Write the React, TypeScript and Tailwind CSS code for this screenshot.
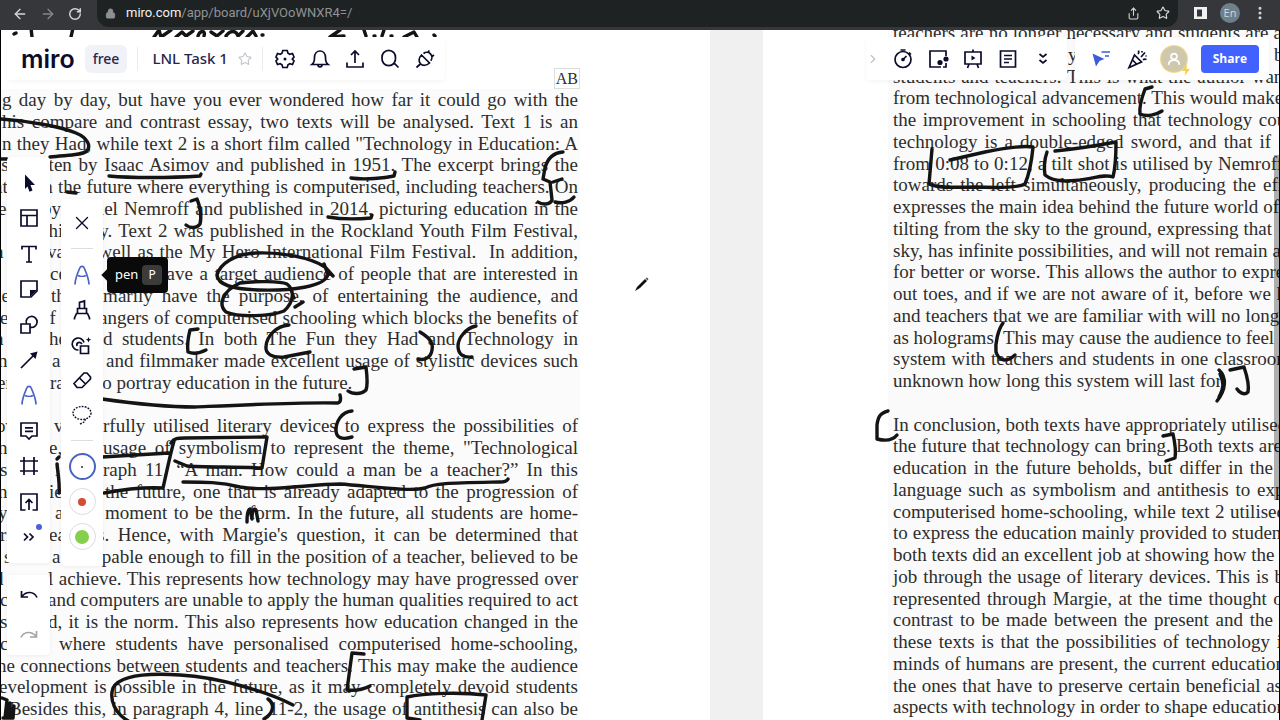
import React from 'react';
import { ArrowLeft, ArrowRight, ChevronRight, Lock, MoreVertical, RotateCw, Share as ShareIcon, Star, X } from 'lucide-react';

// A fragment of a line: where it starts on the board and what it says.
type Fragment = [x: number, text: string];

interface Line {
  parts: Fragment[];
  end: number;
}

const row = (end: number, ...parts: Fragment[]): Line => ({ parts, end });
const left = (...parts: Fragment[]): Line => row(578, ...parts);
const right = (end: number, text: string): Line => row(end, [893, text]);

const essayLines: Line[] = [
  left([2, 'g day by day, but have you ever wondered how far it could go with the']),
  left([2, 'his compare and contrast essay, two texts will be analysed. Text 1 is an']),
  left([2, 'n they Had, while text 2 is a short film called "Technology in Education: A']),
  left([-4, 'is'], [18, 'written by Isaac Asimov and published in 1951. The excerpt brings the']),
  left([-6, 'at'], [38, 'in the future where everything is computerised, including teachers. On']),
  left([-2, 'ed'], [42, 'by Daniel Nemroff and published in 2014, picturing education in the']),
  left([37, 'This way. Text 2 was published in the Rockland Youth Film Festival,']),
  left([-6, 'n'], [10, 'Festival as well as the My Hero International Film Festival.\u00a0 In addition,']),
  left([50, 'ces'], [157, 'have a target audience of people that are interested in']),
  left([-8, 'ne'], [51, 'th'], [82, 'primarily have the purpose, of entertaining the audience, and']),
  left([0, 'e'], [40, 'of the dangers of computerised schooling which blocks the benefits of']),
  left([-6, 'n'], [49, 'he'], [85, 'and students. In both The Fun they Had and Technology in']),
  left([-2, 'n'], [52, 'a'], [106, 'and filmmaker made excellent usage of stylistic devices such']),
  row(348, [-3, 'en'], [50, 'ra'], [97, 'to portray education in the future.']),
  row(578, [0, '']),
  left([-4, 'ov'], [54, 'v'], [103, 'rfully utilised literary devices to express the possibilities of']),
  left([-2, 'n'], [49, 'e,'], [103, 'usage of symbolism to represent the theme, "Technological']),
  left([0, 'ss'], [55, 'i'], [103, 'raph 11, “A man. How could a man be a teacher?” In this']),
  left([-2, 'n'], [49, 'ie'], [105, 'the future, one that is already adapted to the progression of']),
  left([-2, 'y'], [55, 'a'], [105, 'moment to be the form. In the future, all students are home-']),
  left([0, 'ri'], [49, 'ea'], [97, 's. Hence, with Margie\'s question, it can be determined that']),
  left([4, 's'], [52, 'a'], [85, 'capable enough to fill in the position of a teacher, believed to be']),
  left([-6, 'd'], [48, 'l achieve. This represents how technology may have progressed over']),
  left([0, 'c'], [48, 'and computers are unable to apply the human qualities required to act']),
  left([0, 's'], [48, 'd, it is the norm. This also represents how education changed in the']),
  left([0, 'c'], [59, 'where students have personalised computerised home-schooling,']),
  left([-3, 'ne connections between students and teachers. This may make the audience']),
  left([-1, 'evelopment is possible in the future, as it may completely devoid students']),
  left([9, 'Besides this, in paragraph 4, line 11-2, the usage of antithesis can also be']),
];

const conclusionLines: Line[] = [
  right(1282, 'teachers are no longer necessary and students are a'),
  row(1284, [1068, 'y'], [1274, 'b']),
  right(1296, 'students and teachers. This is what the author wants'),
  right(1280, 'from technological advancement. This would make'),
  right(1301, 'the improvement in schooling that technology could'),
  right(1271, 'technology is a double-edged sword, and that if'),
  right(1283, 'from 0:08 to 0:12, a tilt shot is utilised by Nemroff'),
  right(1306, 'towards the left simultaneously, producing the effect'),
  right(1279, 'expresses the main idea behind the future world of'),
  right(1272, 'tilting from the sky to the ground, expressing that'),
  right(1281, 'sky, has infinite possibilities, and will not remain a'),
  right(1299, 'for better or worse. This allows the author to express'),
  right(1286, 'out toes, and if we are not aware of it, before we k'),
  right(1294, 'and teachers that we are familiar with will no longer'),
  right(1272, 'as holograms. This may cause the audience to feel'),
  right(1291, 'system with teachers and students in one classroom'),
  right(1225, 'unknown how long this system will last for.'),
  row(1280, [893, '']),
  right(1286, 'In conclusion, both texts have appropriately utilised'),
  right(1282, 'the future that technology can bring. Both texts are'),
  right(1273, 'education in the future beholds, but differ in the'),
  right(1314, 'language such as symbolism and antithesis to express'),
  right(1286, 'computerised home-schooling, while text 2 utilised'),
  right(1294, 'to express the education mainly provided to students'),
  right(1274, 'both texts did an excellent job at showing how the'),
  right(1284, 'job through the usage of literary devices. This is b'),
  right(1289, 'represented through Margie, at the time thought of'),
  right(1273, 'contrast to be made between the present and the'),
  right(1282, 'these texts is that the possibilities of technology i'),
  right(1285, 'minds of humans are present, the current education'),
  right(1282, 'the ones that have to preserve certain beneficial as'),
  right(1284, 'aspects with technology in order to shape education'),
];

const strokes = [
  // handwriting cut off by the top bar
  'M14 34L16 33 M31 28L32 37 M73 28L71 37',
  'M154 37L159 30L161 37L171 30 M176 37L182 32L186 36L193 31 M198 36C200 30 206 30 204 36 M211 32L217 36L223 31 M226 36C230 30 236 30 238 36L243 31 M247 37L253 31L256 36 M262 35L263 35',
  'M340 30L330 37L344 36 M364 30L366 36 M374 36L375 36 M384 30L382 36 M391 36L392 36 M404 37L414 32L417 37 M434 35L435 36',
  'M0 119C30 121 62 127 76 133C88 138 91 146 87 151C80 156 66 155 50 157 M1 159L7 159',
  'M109 176C130 178 170 178 200 176L201 174 M67 192L76 193',
  'M191 201L197 199C200 206 202 217 200 224C197 228 191 229 186 225',
  'M333 276L325 267C310 257 280 252 256 253C234 254 220 264 217 275C218 285 232 289 258 290C290 291 326 287 328 274L324 264',
  'M303 302L295 307 M240 283C256 281 280 281 287 284C295 290 294 302 284 311C272 316 240 318 226 312C218 305 222 291 240 283 M291 290L294 298',
  'M198 329L190 330C188 338 187 346 188 352C193 354 200 353 206 350',
  'M289 325C276 326 267 336 266 346C265 354 272 358 284 357L310 352',
  'M420 332C428 337 434 342 432 350C431 357 425 361 418 359',
  'M476 326C466 328 458 338 458 346C458 354 463 358 472 357',
  'M354 369L366 367C367 375 368 385 366 390C361 395 352 394 348 391',
  'M102 399C130 403 170 407 195 407C240 405 300 402 338 403C341 402 341 399 340 395',
  'M352 411C341 412 336 422 336 430C336 438 342 440 352 437',
  'M171 443C174 438 178 438 185 438L267 437L262 468C240 467 200 467 187 466L175 461',
  'M102 457L169 453 M174 441C170 455 166 475 163 488C145 487 120 490 104 493',
  'M57 459L59 457 M57 464C58 474 60 484 59 493',
  'M183 482C205 482 220 482 240 487C270 492 310 484 340 484C370 486 410 492 425 488C435 483 450 483 500 482C505 482 507 481 508 479',
  'M247 522C247 514 248 509 250 509L252 519C252 510 254 508 256 510L258 521',
  'M351 178C365 180 385 178 394 176L395 172',
  'M328 217C345 220 360 219 371 218L372 215',
  'M563 152C552 153 547 160 545 168L543 179L550 182L552 200C550 205 542 205 538 202 M553 182L562 179 M555 202C562 204 570 202 574 197',
  'M364 654L352 653L347 690C355 691 362 690 370 686',
  'M420 720L407 718V697C425 693 460 692 486 695L482 720',
  'M293 705C270 693 220 677 180 675C150 673 120 675 113 688C109 700 115 714 130 722 M268 699C275 704 274 713 264 719',
  'M2 698L7 700L5 718L10 703L9 718L14 706L13 718L3 718',
  'M99 345L99 346',
  'M1152 87L1145 89C1142 97 1139 107 1140 114C1147 117 1156 115 1162 111',
  'M932 149L929 184C940 189 960 187 975 187C1000 188 1020 187 1025 184C1030 172 1032 158 1033 147C1020 145 1000 149 985 152L950 160',
  'M1047 152C1044 160 1044 170 1045 175C1055 183 1070 181 1080 180C1095 178 1105 174 1113 177C1116 165 1116 155 1116 142C1100 145 1075 149 1055 151',
  'M1003 323C998 330 995 343 996 352C999 361 1006 363 1015 355',
  'M1219 370C1227 377 1226 390 1217 401 M1220 374C1224 382 1224 388 1219 397',
  'M1230 370L1244 367C1247 376 1249 387 1248 392C1244 396 1239 392 1237 389',
  'M888 411C880 413 878 417 877 425L877 439C885 441 893 440 897 435',
  'M1163 436L1173 434C1175 443 1176 452 1175 458L1166 461',
];

const Icon: React.FC<{ d?: string; fill?: string; className?: string; children?: React.ReactNode }> = ({ d, fill, className = '', children }) => (
  <svg viewBox="0 0 24 24" className={`size-6 shrink-0 ${className}`} fill="none" stroke="currentColor" strokeWidth="1.7" aria-hidden="true">
    {d && <path d={d} />}
    {fill && <path d={fill} fill="currentColor" stroke="none" />}
    {children}
  </svg>
);

const PenIcon = () => (
  <Icon className="text-[#4a62c4]" d="M5 21.500C5 16 8 9 10 4.500C10.400 3 13.600 3 14 4.500C16 9 19 16 19 21.500M8 12.500C10 13.500 14 13.500 16 12.500" />
);

const mainTools = [
  { label: 'Select', icon: <Icon fill="M8 3.500L18 14H13.500L15.500 19.500L12.500 20.800L10.500 15.500L8 18Z" /> },
  { label: 'Templates', icon: <Icon d="M4 4H20V20H4ZM4 9.500H20M10 9.500V20" /> },
  { label: 'Text', icon: <Icon d="M5 7.500V4.500H19V7.500M12 4.500V20M9 20H15" /> },
  { label: 'Sticky note', icon: <Icon d="M4 4H20V14L14 20H4Z" fill="M20 13H13V20Z" /> },
  { label: 'Shapes', icon: <Icon d="M4 11H13V20H4ZM9.500 11A5.500 5.500 0 1 1 13 14.200" /> },
  { label: 'Connection line', icon: <Icon d="M4 20L17 7" fill="M20.500 3.500L18.500 11L13 5.500Z" /> },
  { label: 'Pen', icon: <PenIcon /> },
  { label: 'Comment', icon: <Icon d="M4 4H20V17H15L12 20L9 17H4ZM8 8.800H16M8 12.300H16" /> },
  { label: 'Frame', icon: <Icon d="M7 3V21M17 3V21M3 7H21M3 17H21" /> },
  { label: 'Upload', icon: <Icon d="M8.500 20H4V4H20V20H15.500M12 20V9.500M8.500 13L12 9.500L15.500 13" /> },
];

const penTools = [
  { label: 'Highlighter', icon: <Icon d="M4.500 21.500V20L6.500 15.500H17.500L19.500 20V21.500M7.500 15.500V10.500H16.500V15.500M9.500 10.500V4.500L14.500 3V10.500" /> },
  {
    label: 'Smart drawing',
    icon: (
      <Icon d="M10.500 13H18.500V20.500H10.500ZM8.500 17A6 6 0 1 1 14 9.500M7 13C6 9 10 8.500 12 11" fill="M18.500 4L19.300 6L21.300 6.800L19.300 7.600L18.500 9.600L17.700 7.600L15.700 6.800L17.700 6Z" />
    ),
  },
  { label: 'Eraser', icon: <Icon d="M4 15.500L14 5H17L20.500 9V11L12 19.500H7ZM9.500 10L15.500 16" /> },
  {
    label: 'Lasso',
    icon: (
      <Icon>
        <ellipse cx="12" cy="10" rx="9" ry="6.500" strokeWidth="1.400" strokeDasharray="1.800 1.200" />
        <path d="M15 16C16 19 12 20 9 21.500" strokeWidth="1.400" strokeDasharray="1.800 1.200" />
      </Icon>
    ),
  },
];

const boardActions = [
  {
    label: 'Settings',
    icon: (
      <Icon d="M9.800 3.500H14.200L15 6.300L16.800 7.300L19.500 6.500L21 10L19.300 12L21 14L19.500 17.500L16.800 16.700L15 17.700L14.200 20.500H9.800L9 17.700L7.200 16.700L4.500 17.500L3 14L4.700 12L3 10L4.500 6.500L7.200 7.300L9 6.300Z">
        <circle cx="12" cy="12" r="1.500" fill="currentColor" stroke="none" />
      </Icon>
    ),
  },
  { label: 'Notifications', icon: <Icon d="M4 17.500C6 16 6.500 14 6.500 10.500C6.500 6.500 9 4 12 4S17.500 6.500 17.500 10.500C17.500 14 18 16 20 17.500ZM10 18C10 20.500 14 20.500 14 18" /> },
  { label: 'Export', icon: <Icon d="M4 15.500V20H20V15.500M12 16V4M8 8L12 4L16 8" /> },
  { label: 'Search', icon: <Icon d="M17.500 11A6.800 6.800 0 1 1 4 11A6.800 6.800 0 1 1 17.500 11ZM15.700 15.700L20.500 20.500" /> },
  { label: 'Apps', icon: <Icon d="M8.500 8L16.500 16C13.500 19 9.500 18.800 7.500 16.800S5.500 11 8.500 8ZM10.500 6.500C13 4.500 16 5.200 17.500 6.800S19.500 11.500 17.800 13.800M3.500 20.500L7.300 17M15 5L16.500 3.500M19 9.500L21 8" /> },
];

const meetingTools = [
  {
    label: 'Timer',
    icon: (
      <Icon d="M12 12.500L15.500 9M9.500 3H14.500M18 5.500L20 7.500">
        <circle cx="12" cy="12.500" r="8" />
        <circle cx="12" cy="12.500" r="1" fill="currentColor" />
      </Icon>
    ),
  },
  {
    label: 'Voting',
    icon: (
      <Icon d="M20 9V4H4V20H15M20 16V20H17">
        <circle cx="14" cy="15.500" r="2.600" fill="currentColor" stroke="none" />
        <circle cx="20" cy="12" r="2.600" fill="currentColor" stroke="none" />
      </Icon>
    ),
  },
  { label: 'Presentation', icon: <Icon d="M4 5H20V17H4ZM12 5V2.500M8 17L6.500 21M16 17L17.500 21" fill="M10.500 8.500L14.500 11L10.500 13.500Z" /> },
  { label: 'Notes', icon: <Icon d="M4.500 4H19.500V20H4.500ZM8 8.500H16M8 12H16M8 15.500H13" /> },
  { label: 'More', icon: <Icon d="M8.500 7L12 10L15.500 7M8.500 13L12 16L15.500 13" /> },
];

const IconButton: React.FC<{ label: string; className?: string; children: React.ReactNode }> = ({ label, className = '', children }) => (
  <button type="button" aria-label={label} className={`flex items-center justify-center ${className}`}>
    {children}
  </button>
);

const BrowserBar = () => (
  <header className="flex h-[30px] shrink-0 items-center bg-[#35373a] text-[#d5d7da]">
    <nav className="flex w-[97px] shrink-0 items-center gap-3 pt-px pb-1 pl-3">
      <IconButton label="Back"><ArrowLeft size={16} /></IconButton>
      <IconButton label="Forward" className="text-[#85878a]"><ArrowRight size={16} /></IconButton>
      <IconButton label="Reload"><RotateCw size={14} strokeWidth={2.5} /></IconButton>
    </nav>
    <div className="mb-1 flex h-[28px] flex-1 items-center rounded-b-xl bg-[#1f2223] pr-2 pl-2">
      <Lock size={11} fill="currentColor" className="mr-2.5 text-[#8d9093]" />
      <button type="button" aria-label="Address" className="flex-1 text-left font-['Roboto',sans-serif] text-[13px] text-[#8f9295]">
        <span className="text-[#f1f1f1]">miro.com</span>/app/board/uXjVOoWNXR4=/
      </button>
      <IconButton label="Share this page" className="mr-4"><ShareIcon size={13} /></IconButton>
      <IconButton label="Bookmark"><Star size={14} /></IconButton>
    </div>
    <div className="flex shrink-0 items-center gap-3 pr-3 pb-1 pl-4">
      <IconButton label="Side panel">
        <svg viewBox="0 0 14 14" className="size-3.5"><path d="M0 1H13V13H0Z" fill="#f1f1f1" /><path d="M3 3.500H8V10.500H3Z" fill="#35373a" /></svg>
      </IconButton>
      <IconButton label="Profile" className="size-5 rounded-full bg-[#6d808b] font-['Open_Sans',sans-serif] text-[11px]">En</IconButton>
      <IconButton label="Menu"><MoreVertical size={16} strokeWidth={2.5} /></IconButton>
    </div>
  </header>
);

const TextLines: React.FC<{ lines: Line[]; origin: number; className: string }> = ({ lines, origin, className }) => (
  <div className={`grid auto-rows-fr font-['Liberation_Serif',serif] text-[19px] leading-[22px] text-[#2d2d2d] ${className}`}>
    {lines.map((line, i) => (
      <p key={i} className="flex min-h-0 whitespace-nowrap" style={{ marginLeft: line.parts[0][0] - origin }}>
        {line.parts.map(([x, text], j) => {
          const isLast = j === line.parts.length - 1;
          const next = isLast ? line.end : line.parts[j + 1][0];
          return (
            <span key={j} className={isLast ? 'shrink-0 [text-align-last:justify]' : 'shrink-0'} style={{ width: next - x }}>
              {text}
            </span>
          );
        })}
      </p>
    ))}
  </div>
);

const Pages = () => (
  <div className="flex h-full bg-[#f0f0f1]">
    <article className="w-[709px] shrink-0 bg-white">
      <div className="flex h-full w-[579px] flex-col bg-[#fbfbfb]">
        <div className="flex h-[59px] shrink-0 items-end justify-end bg-white">
          <span className="border border-[#dedede] px-px font-['Liberation_Serif',serif] text-[16px] leading-[19px] text-[#2d2d2d]">AB</span>
        </div>
        <TextLines lines={essayLines} origin={1} className="h-[631px] shrink-0" />
      </div>
    </article>
    <article className="ml-[53px] min-w-0 flex-1 overflow-hidden bg-white pl-[125px]">
      <div className="h-full bg-[#fafafa] pl-[5px]">
        <TextLines lines={conclusionLines} origin={893} className="-mt-2 h-[696px]" />
      </div>
    </article>
  </div>
);

const Ink = () => (
  <svg viewBox="1 30 1278 690" className="pointer-events-none absolute top-0 left-0 h-[690px] w-[1278px]" fill="none" stroke="#141414" strokeWidth="3.400" strokeLinecap="round" strokeLinejoin="round" aria-hidden="true">
    {strokes.map((d) => <path key={d} d={d} />)}
  </svg>
);

const TopBar = () => (
  <div className="absolute inset-x-0 top-[7px] flex h-[43px] items-center justify-between pr-2.5 pl-1.5 font-['Noto_Sans',sans-serif] text-[#0b0b2c]">
    <div className="flex h-full items-center rounded bg-white pr-2 pl-3.5 shadow-[0_2px_4px_rgba(5,0,56,0.04)]">
      <a href="#" className="font-['Inter',sans-serif] text-[25px] leading-7 font-semibold">miro</a>
      <span className="ml-2.5 rounded-md bg-[#f1f1f8] px-2 py-1 text-[14px] leading-5 font-medium text-[#28264e]">free</span>
      <div className="ml-2.5 h-6 w-px bg-[#ececf0]" />
      <button type="button" className="ml-3.5 text-[15px] font-medium text-[#28264e]">LNL Task 1</button>
      <IconButton label="Star board" className="ml-2.5 text-[#c5c5cc]"><Star size={14} /></IconButton>
      <div className="mx-2.5 h-6 w-px bg-[#ececf0]" />
      <div className="flex gap-[11px]">
        {boardActions.map((a) => <IconButton key={a.label} label={a.label}>{a.icon}</IconButton>)}
      </div>
    </div>
    <div className="flex h-full gap-2">
      <div className="flex items-center gap-[11px] rounded bg-white pr-3 shadow-[0_2px_4px_rgba(5,0,56,0.04)]">
        <IconButton label="Collapse" className="text-[#c0c0c6]"><ChevronRight size={14} /></IconButton>
        {meetingTools.map((t) => <IconButton key={t.label} label={t.label}>{t.icon}</IconButton>)}
      </div>
      <div className="flex items-center gap-3 rounded bg-white pr-2.5 pl-3.5 shadow-[0_2px_4px_rgba(5,0,56,0.04)]">
        <IconButton label="Hide cursors">
          <Icon className="text-[#3f5bdb]" d="M12.500 5H21M16 9H20" fill="M3.500 6.500L15.500 12L10.500 14L7 19.500Z" />
        </IconButton>
        <IconButton label="Reactions">
          <Icon d="M4 20.500L9.500 8L16.500 15ZM7.500 13L12 17.500M13 7C14 6 14 5 13.500 3.500M16 10L20 5.500M18 13C19 12 20 12 21.500 12.500M17 4V5.500M21 8.500V9.500" />
        </IconButton>
        <IconButton label="Account" className="relative size-[26px] rounded-full bg-[#cfc8ae] text-white ring-1 ring-[#f2dc8c]">
          <svg viewBox="0 0 24 24" className="size-5" fill="none" stroke="currentColor" strokeWidth="2" aria-hidden="true">
            <circle cx="12" cy="9" r="3.500" />
            <path d="M5.500 19C6 11.500 18 11.500 18.500 19" />
          </svg>
          <svg viewBox="0 0 10 12" className="absolute -right-1 -bottom-1 h-3 w-2.5" aria-hidden="true"><path d="M6 0L1 7H4.500L3.500 12L9 5H5.500Z" fill="#f7d04a" /></svg>
        </IconButton>
        <button type="button" className="ml-0.5 h-7 rounded bg-[#4262ff] px-3 font-['Open_Sans',sans-serif] text-[12px] font-bold text-white">Share</button>
      </div>
    </div>
  </div>
);

const MainToolbar = () => (
  <div className="absolute top-[127px] left-1.5 flex w-[43px] flex-col gap-3 text-[#0b0b2c]">
    <div className="flex h-[406px] flex-col rounded bg-white py-2 shadow-[0_1px_4px_rgba(5,0,56,0.06)]">
      {mainTools.map((t) => <IconButton key={t.label} label={t.label} className="flex-1">{t.icon}</IconButton>)}
      <IconButton label="More tools" className="relative flex-1">
        <Icon d="M7 8.500L10.500 12L7 15.500M12.500 8.500L16 12L12.500 15.500" />
        <span className="absolute top-1 right-2 size-1.5 rounded-full bg-[#4a62d8]" />
      </IconButton>
    </div>
    <div className="flex flex-col rounded bg-white shadow-[0_1px_4px_rgba(5,0,56,0.06)]">
      <IconButton label="Undo" className="h-10"><Icon d="M4.500 8V14H11M5 13.500C9 8 17 8 20 14.500" /></IconButton>
      <IconButton label="Redo" className="h-10 text-[#a3a3a8]"><Icon d="M19.500 8V14H13M19 13.500C15 8 7 8 4 14.500" /></IconButton>
    </div>
  </div>
);

const PenToolbar = () => (
  <div className="absolute top-[169px] left-[60px] flex w-[42px] flex-col rounded bg-white pt-1.5 pb-3 text-[#0b0b2c] shadow-[0_1px_4px_rgba(5,0,56,0.06)]">
    <IconButton label="Close" className="h-[35px]"><X size={22} strokeWidth={1.5} /></IconButton>
    <hr className="mx-2.5 my-2 border-[#dddde2]" />
    <div className="relative">
      <IconButton label="Pen" className="h-[35px] w-full"><PenIcon /></IconButton>
      <div role="tooltip" className="absolute top-0 left-full ml-1 flex h-9 items-center gap-1 rounded-sm bg-[#0a0a0a] pr-1.5 pl-2 font-['Noto_Sans',sans-serif] text-[13px] text-white">
        <span className="absolute top-3.5 -left-1 size-2 rotate-45 bg-[#0a0a0a]" />
        <span className="relative">pen</span>
        <kbd className="rounded-sm bg-[#3b3b3b] px-1.5 font-['Noto_Sans',sans-serif] text-[12px] leading-5">P</kbd>
      </div>
    </div>
    {penTools.map((t) => <IconButton key={t.label} label={t.label} className="h-[35px]">{t.icon}</IconButton>)}
    <hr className="mx-2.5 my-2 border-[#dddde2]" />
    <IconButton label="Black, thin" className="h-[35px]">
      <span className="flex size-[27px] items-center justify-center rounded-full border-2 border-[#4a62c4]"><span className="size-0.5 rounded-full bg-[#333]" /></span>
    </IconButton>
    <IconButton label="Red, medium" className="h-[35px]">
      <span className="flex size-[27px] items-center justify-center rounded-full border border-[#dcdce0]"><span className="size-2 rounded-full bg-[#d64b35]" /></span>
    </IconButton>
    <IconButton label="Green, thick" className="h-[35px]">
      <span className="flex size-[27px] items-center justify-center rounded-full border border-[#dcdce0]"><span className="size-3.5 rounded-full bg-[#86cf4d]" /></span>
    </IconButton>
  </div>
);

export default function App() {
  return (
    <div className="flex h-screen flex-col overflow-hidden bg-[#35373a]">
      <BrowserBar />
      <main className="relative min-h-0 flex-1 overflow-hidden border-x border-black bg-white">
        <Pages />
        <Ink />
        <div className="absolute top-[125px] right-0 h-[345px] w-[5px] bg-black/30" />
        <svg viewBox="0 0 16 16" className="absolute top-[246px] left-[633px] size-4" aria-hidden="true">
          <path d="M1 15L3 11L11 3L13 5L6 12Z" fill="#111" />
          <path d="M11.500 2.500L13 1.500L14.500 3L13.500 4.500Z" fill="#555" />
        </svg>
        <TopBar />
        <MainToolbar />
        <PenToolbar />
      </main>
    </div>
  );
}
